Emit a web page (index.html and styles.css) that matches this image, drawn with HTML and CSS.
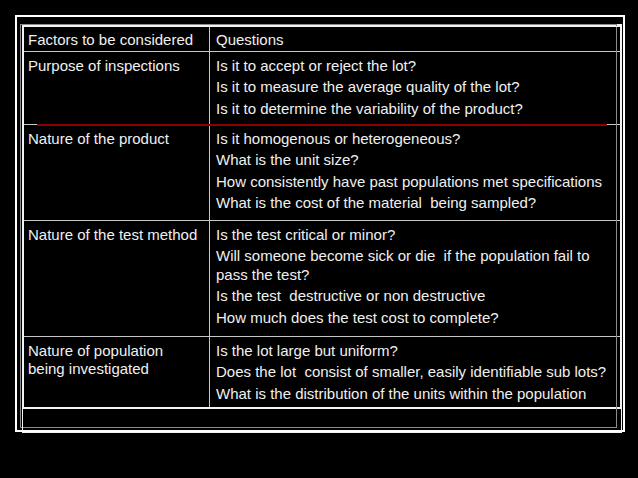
FILE: index.html
```html
<!DOCTYPE html>
<html lang="en">
<head>
<meta charset="utf-8">
<title>Factors and Questions</title>
<link rel="stylesheet" href="styles.css">
</head>
<body>
<div class="slide">
  <div class="frame">
    <div class="grid">
      <div class="cell c1 head"><p>Factors to be considered</p></div>
      <div class="cell c2 head"><p>Questions</p></div>

      <div class="cell c1"><p>Purpose of inspections</p></div>
      <div class="cell c2">
        <p>Is it to accept or reject the lot?</p>
        <p>Is it to measure the average quality of the lot?</p>
        <p>Is it to determine the variability of the product?</p>
      </div>

      <div class="cell c1"><p>Nature of the product</p></div>
      <div class="cell c2">
        <p>Is it homogenous or heterogeneous?</p>
        <p>What is the unit size?</p>
        <p>How consistently have past populations met specifications</p>
        <p>What is the cost of the material  being sampled?</p>
      </div>

      <div class="cell c1"><p>Nature of the test method</p></div>
      <div class="cell c2">
        <p>Is the test critical or minor?</p>
        <p>Will someone become sick or die  if the population fail to pass the test?</p>
        <p>Is the test  destructive or non destructive</p>
        <p>How much does the test cost to complete?</p>
      </div>

      <div class="cell c1 last"><p>Nature of population<br>being investigated</p></div>
      <div class="cell c2 last">
        <p>Is the lot large but uniform?</p>
        <p>Does the lot  consist of smaller, easily identifiable sub lots?</p>
        <p>What is the distribution of the units within the population</p>
      </div>
    </div>
    <div class="redline"></div>
  </div>
</div>
</body>
</html>
```

FILE: styles.css
```css
html, body {
  margin: 0;
  padding: 0;
  background: #000;
}

body {
  width: 638px;
  height: 478px;
  overflow: hidden;
  font-family: "Liberation Sans", Arial, sans-serif;
  font-size: 15px;
  color: #f0f0f0;
}

.slide {
  box-sizing: border-box;
  margin: 15px 0 0 15px;
  width: 610px;
  height: 417px;
  border: 2px solid #fff;
  padding: 3px 1px 1px 3px;
}

.frame {
  position: relative;
  width: 602px;
  height: 409px;
}

.frame::before {
  content: "";
  position: absolute;
  left: 0;
  top: 0;
  width: 597px;
  height: 404px;
  box-sizing: border-box;
  border: 1px solid #8c8c8c;
  pointer-events: none;
}

.frame::after {
  content: "";
  position: absolute;
  left: 2px;
  top: 2px;
  right: 0;
  bottom: 0;
  box-sizing: border-box;
  border: 1px solid #f4f4f4;
  pointer-events: none;
}

.grid {
  box-sizing: border-box;
  margin: 4px 0 0 2px;
  width: 600px;
  border: 2px solid #f2f2f2;
  display: grid;
  grid-template-columns: 186px 1fr;
  grid-template-rows: 26px 73px 96px 116px 70px;
}

.cell {
  box-sizing: border-box;
  border-bottom: 1px solid #c8c8c8;
  padding: 1.5px 6px 0 6px;
  line-height: 18.5px;
}

.cell.last {
  border-bottom: none;
}

.c1 {
  border-right: 1px solid #c8c8c8;
  padding-left: 4px;
}

.cell p {
  margin: 3px 0 0;
  white-space: pre-wrap;
}

.redline {
  position: absolute;
  left: 17px;
  top: 100px;
  width: 570px;
  height: 2px;
  background: #8b0000;
}
```
